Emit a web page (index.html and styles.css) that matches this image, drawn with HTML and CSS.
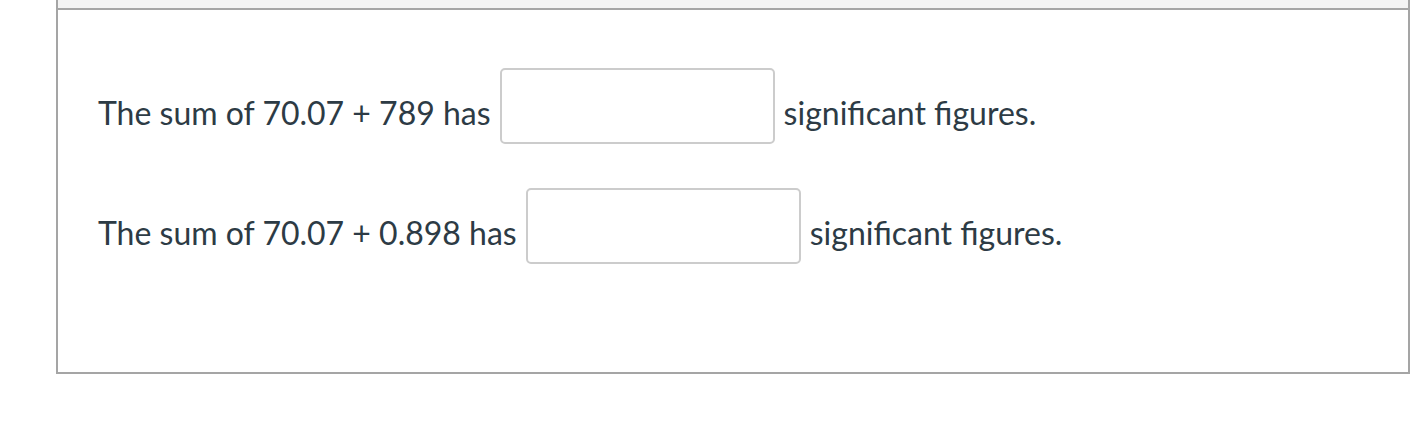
FILE: index.html
```html
<!DOCTYPE html>
<html>
<head>
<meta charset="utf-8">
<link rel="stylesheet" href="styles.css">
</head>
<body>
<div class="question">
  <div class="header"></div>
  <div class="content">
    <div class="row">
      <span class="label">The sum of 70.07 + 789 has</span>
      <input class="answer" type="text">
      <span class="label">significant figures.</span>
    </div>
    <div class="row">
      <span class="label">The sum of 70.07 + 0.898 has</span>
      <input class="answer" type="text">
      <span class="label">significant figures.</span>
    </div>
  </div>
</div>
</body>
</html>
```
FILE: styles.css
```css
html, body {
  margin: 0;
  padding: 0;
  background: #ffffff;
}
body {
  font-family: Lato, "Liberation Sans", sans-serif;
  color: #2d3b45;
}
.question {
  margin-left: 56px;
  width: 1354px;
  box-sizing: border-box;
  border: 2px solid #a5a5a5;
  border-top: none;
  height: 374px;
}
.header {
  height: 8px;
  background: #f3f3f3;
  border-bottom: 2px solid #a5a5a5;
}
.content {
  padding: 58px 0 0 40px;
  display: flex;
  flex-direction: column;
  gap: 44px;
}
.row {
  display: flex;
  align-items: center;
  gap: 10px;
  font-size: 32px;
}
.label {
  padding-top: 12px;
}
.answer {
  width: 275px;
  height: 76px;
  box-sizing: border-box;
  border: 2px solid #cccccc;
  border-radius: 5px;
  background: #fff;
  margin: 0 -1px 0 -1px;
  padding: 0 8px;
  font: inherit;
}
```
